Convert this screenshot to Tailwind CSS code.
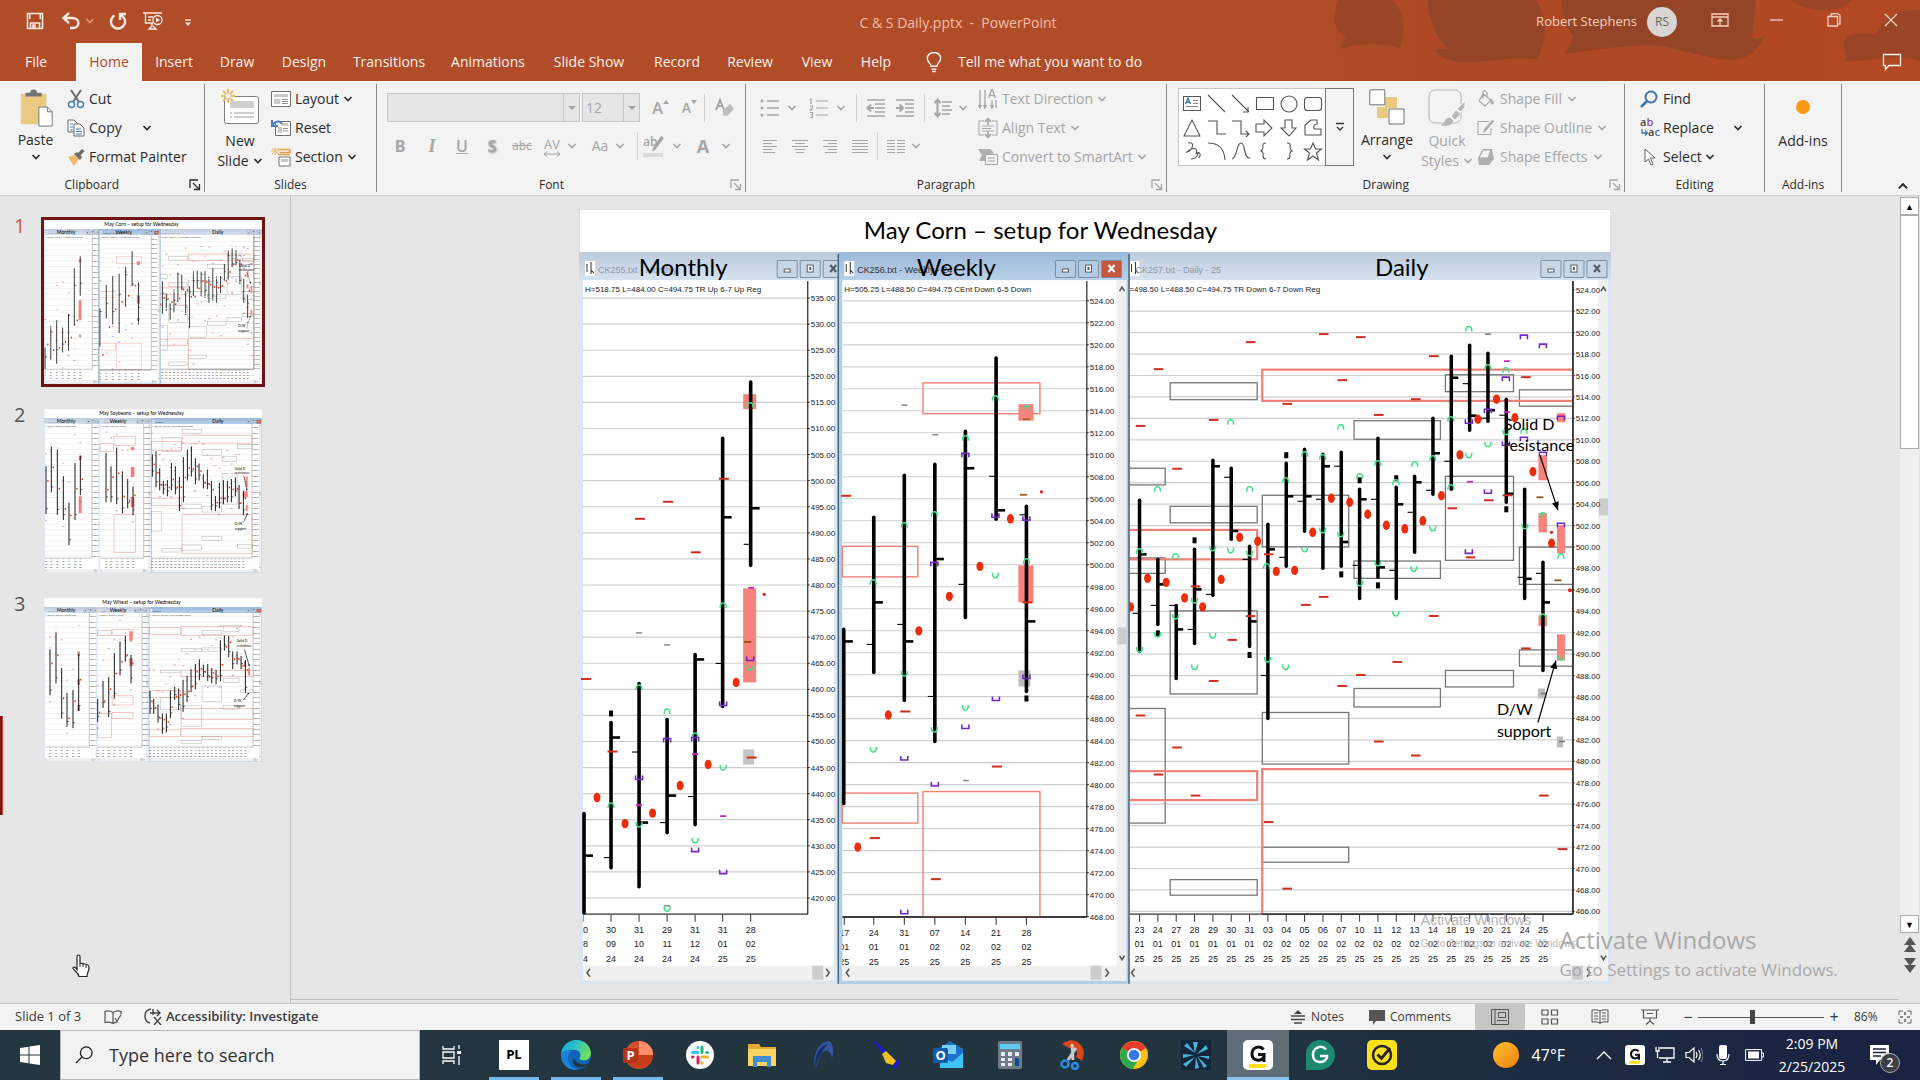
<!DOCTYPE html>
<html lang="en">
<head>
<meta charset="utf-8">
<meta name="viewport" content="width=device-width, initial-scale=1">
<title>C &amp; S Daily.pptx - PowerPoint</title>
<script src="https://cdn.jsdelivr.net/npm/@tailwindcss/browser@4"></script>
</head>
<body class="flex min-h-screen flex-col overflow-x-hidden bg-[#e6e6e6] font-['Open_Sans',sans-serif] text-sm text-[#262626]">

<!-- Icon sprite -->
<svg class="hidden" aria-hidden="true">
  <symbol id="chev" viewBox="0 0 10 10"><path d="M1.5 3l3.5 3.5L8.500 3" fill="none" stroke="currentColor" stroke-width="1.6"/></symbol>
  <symbol id="launch" viewBox="0 0 12 12"><path d="M1 9V1h8M4 4l6 6M10.500 5v5.500H5" fill="none" stroke="currentColor" stroke-width="1.300"/></symbol>
  <symbol id="save" viewBox="0 0 18 18"><path d="M1.500 1.500h15v15h-15zM4.500 16v-5h9v5M7 16v-3h2v3" fill="none" stroke="currentColor" stroke-width="1.600"/><path d="M3 2h1.500v5H3zm10.500 0H15v5h-1.500z" fill="currentColor"/></symbol>
  <symbol id="undo" viewBox="0 0 20 18"><path d="M8 1L2.500 6 8 11M3 6h8c9 0 8 10 1 10H9" fill="none" stroke="currentColor" stroke-width="2.400"/></symbol>
  <symbol id="redo" viewBox="0 0 18 18"><path d="M5.500 3.500a7 7 0 1 0 6-.5M11 8V2h6" fill="none" stroke="currentColor" stroke-width="2.400"/></symbol>
  <symbol id="present" viewBox="0 0 20 18"><path d="M0 1h19M2.500 1v10H10M5 5h5M5 8h3M9 11v3l-3 3h7l-3-3" fill="none" stroke="currentColor" stroke-width="1.400"/><circle cx="14.500" cy="8" r="4.500" fill="none" stroke="currentColor" stroke-width="1.300"/><path d="M13 5.500v5l4-2.500z" fill="currentColor"/></symbol>
  <symbol id="customize" viewBox="0 0 8 8"><path d="M1 1h6" stroke="currentColor" stroke-width="1.300"/><path d="M1 3.500h6L4 7z" fill="currentColor"/></symbol>
  <symbol id="bulb" viewBox="0 0 16 22"><path d="M5 15c0-3-4-4-4-8.500a7 6 0 0 1 14 0C15 11 11 12 11 15zM5.500 18h5M6 20.500h4" fill="none" stroke="currentColor" stroke-width="1.500"/></symbol>
  <symbol id="paste" viewBox="0 0 36 40"><path d="M2 5h27v32H2z" fill="#eaca80"/><path d="M7 8V4h5a3.500 3.500 0 0 1 7 0h5v4z" fill="#737373"/><path d="M21 19h9l5 5v15H21z" fill="#fff" stroke="#737373"/><path d="M30 19v5h5" fill="none" stroke="#737373"/></symbol>
  <symbol id="cut" viewBox="0 0 18 20"><path d="M4 1l8 12M14 1L6 13" stroke="#6b6b6b" stroke-width="2" fill="none"/><circle cx="4.500" cy="15.500" r="3" fill="none" stroke="#4a7fb5" stroke-width="1.500"/><circle cx="13.500" cy="15.500" r="3" fill="none" stroke="#4a7fb5" stroke-width="1.500"/></symbol>
  <symbol id="copy" viewBox="0 0 18 18"><path d="M1 1h6l3 3v9H1z" fill="#fff" stroke="#6b6b6b"/><path d="M7 5h6l4 4v8H7z" fill="#fff" stroke="#6b6b6b"/><path d="M3 5h3M3 8h3M3 11h3M9 10h5M9 12.500h6M9 15h6" stroke="#4a7fb5"/></symbol>
  <symbol id="painter" viewBox="0 0 18 18"><path d="M1 9l7-2 4 4-5 7z" fill="#eaba6a"/><path d="M7 6l6 6 2-3-5-5zM11 5l4-4 2.500 2-4 4.500z" fill="#6b6b6b"/></symbol>
  <symbol id="newslide" viewBox="0 0 40 38"><rect x="4.500" y="8.500" width="34" height="27" rx="2" fill="#fff" stroke="#808080"/><path d="M10 13h24v7H10z" fill="#d0d0d0"/><path d="M10 25h2M14 25h20M10 29h2M14 29h20" stroke="#a0a0a0"/><path d="M8 1v14M1 8h14M3 3l10 10M13 3L3 13" stroke="#eaba6a" stroke-width="2"/><circle cx="8" cy="8" r="2.500" fill="#f3f3f3"/></symbol>
  <symbol id="layout" viewBox="0 0 20 18"><path d="M.5 1.500h19v15H.5z" fill="#fff" stroke="#707070"/><path d="M3 4h14v3H3zM3 9h6v5H3z" fill="#c8c8c8"/><path d="M11 9.500h6M11 11.500h6M11 13.500h6" stroke="#909090"/></symbol>
  <symbol id="reset" viewBox="0 0 20 18"><path d="M4.500 2.500h15v14h-15z" fill="#fff" stroke="#707070"/><path d="M7 8h4v6H7zM11 4h6v3h-6z" fill="#c8c8c8"/><path d="M12 9.500h5M12 12h5" stroke="#909090"/><path d="M1 1v6h6M1 6.500C4 2 9 1 11 5" fill="none" stroke="#4a7fb5" stroke-width="2"/></symbol>
  <symbol id="section" viewBox="0 0 20 20"><path d="M7 2.500h12v3H9M7 7.500h12" fill="none" stroke="#e0a050" stroke-width="1.500"/><path d="M4 0v8M0 4h8M1 1l6 6M7 1L1 7" stroke="#eaba6a"/><path d="M8 10h11v9H8z" fill="#fff" stroke="#707070"/><path d="M10 12h7v3h-7z" fill="#c8c8c8"/></symbol>
  <symbol id="eraser" viewBox="0 0 20 20"><path d="M1 12L5 2l4 10M2.500 8h5" fill="none" stroke="#a6a6a6" stroke-width="2"/><path d="M8 12l7-6 4 5-7 7-4-1z" fill="#bdbdbd"/></symbol>
  <symbol id="bullets" viewBox="0 0 20 20"><circle cx="2" cy="3" r="1.500" fill="#a6a6a6"/><circle cx="2" cy="10" r="1.500" fill="#a6a6a6"/><circle cx="2" cy="17" r="1.500" fill="#a6a6a6"/><path d="M7 3h12M7 10h12M7 17h12" stroke="#a6a6a6" stroke-width="1.300"/></symbol>
  <symbol id="numbers" viewBox="0 0 20 20"><path d="M1 2l1-1v5M1 8h2.500v2L1 12h2.500M1 14.500h2.500v5H1M1.500 17h2M7 3h12M7 10h12M7 17h12" fill="none" stroke="#a6a6a6" stroke-width="1.200"/></symbol>
  <symbol id="outdent" viewBox="0 0 20 20"><path d="M1 2h18M9 6h10M9 10h10M9 14h10M1 18h18" stroke="#a6a6a6" stroke-width="1.400"/><path d="M8 10H2M5 6.500L1.500 10 5 13.500" fill="none" stroke="#a6a6a6" stroke-width="2"/></symbol>
  <symbol id="indent" viewBox="0 0 20 20"><path d="M1 2h18M10 6h9M10 10h9M10 14h9M1 18h18" stroke="#a6a6a6" stroke-width="1.400"/><path d="M1 10h6M4.500 6.500L8 10l-3.500 3.500" fill="none" stroke="#a6a6a6" stroke-width="2"/></symbol>
  <symbol id="spacing" viewBox="0 0 18 20"><path d="M8 4h10M8 8h8M8 12h10M8 16h8" stroke="#a6a6a6" stroke-width="1.400"/><path d="M3.500 2v16M.5 5l3-3.500 3 3.500M.5 15l3 3.500 3-3.500" fill="none" stroke="#a6a6a6" stroke-width="2"/></symbol>
  <symbol id="al" viewBox="0 0 16 14"><path d="M1 1.500h14M1 4.500h9M1 7.500h14M1 10.500h9M1 13.500h12" stroke="#a6a6a6"/></symbol>
  <symbol id="ac" viewBox="0 0 16 14"><path d="M0 1.500h16M3 4.500h10M0 7.500h16M3 10.500h10M4 13.500h8" stroke="#a6a6a6"/></symbol>
  <symbol id="ar" viewBox="0 0 16 14"><path d="M1 1.500h14M6 4.500h9M1 7.500h14M6 10.500h9M3 13.500h12" stroke="#a6a6a6"/></symbol>
  <symbol id="aj" viewBox="0 0 16 14"><path d="M0 1.500h16M0 4.500h16M0 7.500h16M0 10.500h16M0 13.500h16" stroke="#a6a6a6"/></symbol>
  <symbol id="cols" viewBox="0 0 18 14"><path d="M0 1.500h8M10 1.500h8M0 4.500h8M10 4.500h8M0 7.500h8M10 7.500h8M0 10.500h8M10 10.500h8M0 13.500h8M10 13.500h8" stroke="#a6a6a6"/></symbol>
  <symbol id="textdir" viewBox="0 0 20 20"><path d="M2 1v18M7 1v18M14 11v8M18 11v8M.5 16L2 19l1.500-3M5.500 16L7 19l1.500-3M12.500 16l1.500 3 1.500-3M10.500 9l3.500-9 3.500 9M12 6.500h4" fill="none" stroke="#a6a6a6" stroke-width="1.300"/></symbol>
  <symbol id="aligntext" viewBox="0 0 20 20"><path d="M6 3H1v14h5M14 3h5v14h-5M4 8h12M4 10.500h9M4 13h12" fill="none" stroke="#a6a6a6"/><path d="M10 1v6M10 13v6M7 4l3-3.500L13 4M7 16l3 3.500 3-3.500" fill="none" stroke="#a6a6a6" stroke-width="1.700"/></symbol>
  <symbol id="smartart" viewBox="0 0 20 16"><path d="M0 0h12l4 4-4 1H7v7H1l3-6z" fill="#b0b0b0"/><path d="M7.500 5.500h12v10h-12z" fill="#f3f3f3" stroke="#a6a6a6"/><path d="M10 9h7M10 12h7" stroke="#a6a6a6"/></symbol>
  <symbol id="arrange" viewBox="0 0 36 36"><path d="M16 8h12v11H16zM8 18h11v11H8z" fill="#eaca80"/><path d="M.8.8h15v15h-15zM20 20h15v15H20z" fill="#fff" stroke="#737373"/></symbol>
  <symbol id="quick" viewBox="0 0 38 38"><rect x="1" y="1" width="32" height="33" rx="6" fill="#f5f5f5" stroke="#b4b4b4"/><path d="M37 12l-8 8 4 3 4-5zM28 21l-5 6 4 4 6-6zM22 28c-6 0-5 7-11 8 7 3 14 1 15-4z" fill="#b8b8b8" stroke="#f3f3f3"/></symbol>
  <symbol id="fill" viewBox="0 0 18 18"><path d="M6 4l8 6-6 6-6-5zM6 9V2q2-3 4 1v4" fill="none" stroke="#a6a6a6" stroke-width="1.200"/><path d="M14 9q3 3 2 5-2 1-2-5z" fill="#a6a6a6" stroke="#a6a6a6"/></symbol>
  <symbol id="outline" viewBox="0 0 18 16"><path d="M12 1.500H1v13h13V8" fill="none" stroke="#a6a6a6"/><path d="M17.500 1L9 11l-3 2 1-4 8-9z" fill="#b0b0b0"/></symbol>
  <symbol id="effects" viewBox="0 0 18 18"><path d="M6 1h9l2 10-5 6H2L1 10z" fill="#b0b0b0"/><path d="M6 2h8l-3 8H2z" fill="#f3f3f3" stroke="#a6a6a6"/></symbol>
  <symbol id="find" viewBox="0 0 18 18"><circle cx="11" cy="7" r="5.500" fill="none" stroke="#3f74b0" stroke-width="2"/><path d="M7 11l-6 6" stroke="#3f74b0" stroke-width="2.500"/></symbol>
  <symbol id="select" viewBox="0 0 12 18"><path d="M1 1v13l3.500-3 2.500 6 2-1-2.500-6H11z" fill="#fff" stroke="#606060"/></symbol>
  <symbol id="comment" viewBox="0 0 20 18"><path d="M1.500 1.500h17v11H7l-3.500 4v-4h-2z" fill="none" stroke="currentColor" stroke-width="1.300"/></symbol>
  <symbol id="gram" viewBox="0 0 30 30"><rect width="30" height="30" rx="5" fill="#fff"/><path d="M6 24h18l-2 4H6z" fill="#ffe11a"/><path d="M20.500 9.500C17 5 9 7 9 14s9 8 12 3v-2.500h-6M21 14v8" fill="none" stroke="#111" stroke-width="3"/></symbol>
</svg>

<header class="relative h-[81px] shrink-0 bg-[#b14c29] text-[#fbe9e2]">
  <svg class="absolute top-0 right-0 h-full w-[620px]" viewBox="0 0 620 81" aria-hidden="true">
    <defs><linearGradient id="hg"><stop offset="0" stop-color="#b14c29"/><stop offset=".25" stop-color="#ad4925"/><stop offset="1" stop-color="#b34824"/></linearGradient></defs>
    <path d="M0 0h620v81H0z" fill="url(#hg)"/>
    <g fill="#944527"><path d="M22 0h70c12 10 14 30 8 48-20-6-42-5-59 1 0-8 4-7 4-12-14-10-12-26-6-37z" opacity=".8"/><path d="M128 0h108c12 18 11 40 1 60-22-6-60 6-84 1-10-2-15-6-17-12h12c-14-14-20-32-20-49z"/><path d="M263 0h193l-4 38c6 2 8 0 12-2-6 14-14 24-36 24-30-2-60-18-94-14-24 1-40 4-69 8 2-6 6-10 8-18-8-10-14-26-10-38z"/><path d="M490 0h62c-14 16-44 12-62 0zM620 10c-20-2-36 8-44 24-14 0-32-4-32 10 0 10 4 12 0 17 24 2 50-8 76 0z" opacity=".8"/></g>
  </svg>
  <div class="relative flex h-[43px] items-center">
    <div class="flex w-[240px] items-center pt-px pb-[3px] pl-[26px]">
      <button aria-label="Save"><svg class="h-[18px] w-[18px]"><use href="#save"/></svg></button>
      <button class="ml-[17px]" aria-label="Undo"><svg class="h-[18px] w-5"><use href="#undo"/></svg></button>
      <button class="ml-1 text-[#dd9b80]" aria-label="Undo options"><svg class="h-2.5 w-2.5"><use href="#chev"/></svg></button>
      <button class="ml-3.5" aria-label="Repeat"><svg class="h-[18px] w-[18px]"><use href="#redo"/></svg></button>
      <button class="ml-4" aria-label="Start from beginning"><svg class="h-[18px] w-5"><use href="#present"/></svg></button>
      <button class="ml-[21px] pt-1" aria-label="Customize toolbar"><svg class="h-2 w-2"><use href="#customize"/></svg></button>
    </div>
    <p class="flex-1 pt-[3px] pl-[140px] text-center text-sm whitespace-pre text-[#f3bda6]">C &amp; S Daily.pptx  -  PowerPoint</p>
    <div class="flex items-center text-[#f8cfbe]">
      <span class="text-[13px]">Robert Stephens</span>
      <span class="ml-2.5 flex h-[30px] w-[30px] items-center justify-center rounded-full bg-[#d9d5d3] text-xs text-[#666]">RS</span>
      <button class="ml-[33px] flex w-[20px] justify-center pb-1" aria-label="Ribbon display options"><svg class="h-3.5 w-[18px]" viewBox="0 0 18 14"><path d="M1 1h16v12H1zM1 4h16M9 12V6M6.500 8.500L9 6l2.500 2.500" fill="none" stroke="currentColor" stroke-width="1.300"/></svg></button>
      <button class="ml-[37px] flex w-[20px] justify-center pb-1" aria-label="Minimize"><svg class="h-3.5 w-3.5" viewBox="0 0 14 14"><path d="M0 7h13" stroke="currentColor" stroke-width="1.300"/></svg></button>
      <button class="ml-9 flex w-[22px] justify-center pb-1" aria-label="Restore"><svg class="h-3.5 w-3.5" viewBox="0 0 14 14"><path d="M1 3.500h9.500V13H1zM4 3V1q6-1 9 1v9h-2" fill="none" stroke="currentColor" stroke-width="1.300"/></svg></button>
      <button class="mr-[22px] ml-[39px] flex w-[14px] justify-center pb-1" aria-label="Close"><svg class="h-3.5 w-3.5" viewBox="0 0 14 14"><path d="M1 1l12 12M13 1L1 13" stroke="currentColor" stroke-width="1.400"/></svg></button>
    </div>
  </div>
  <nav class="relative flex h-[38px] items-center text-sm text-[#fdf1ec]">
    <a href="#" class="flex w-[76px] justify-center pr-1">File</a>
    <a href="#" class="flex h-full w-[66px] items-center justify-center bg-[#f3f3f3] text-[#b14c29]">Home</a>
    <a href="#" class="w-[64px] text-center">Insert</a>
    <a href="#" class="w-[62px] text-center">Draw</a>
    <a href="#" class="w-[72px] text-center">Design</a>
    <a href="#" class="w-[98px] text-center">Transitions</a>
    <a href="#" class="w-[100px] text-center">Animations</a>
    <a href="#" class="w-[102px] text-center">Slide Show</a>
    <a href="#" class="w-[74px] text-center">Record</a>
    <a href="#" class="w-[72px] text-center">Review</a>
    <a href="#" class="w-[62px] text-center">View</a>
    <a href="#" class="w-[56px] text-center">Help</a>
    <button class="ml-[22px] flex items-center gap-4"><svg class="h-[21px] w-4"><use href="#bulb"/></svg><span>Tell me what you want to do</span></button>
    <button class="mr-[18px] ml-auto" aria-label="Comments"><svg class="h-[18px] w-5"><use href="#comment"/></svg></button>
  </nav>
</header>

<!-- Ribbon -->
<section class="flex h-[115px] shrink-0 border-b border-[#cfcfcf] bg-[#f3f3f3] py-[3px] text-sm text-[#2b2b2b]" aria-label="Home ribbon">
  <div class="flex w-[205px] shrink-0 flex-col border-r border-[#8a8a8a]">
    <div class="flex h-[87px]">
      <button class="flex w-[67px] flex-col items-center pt-[5px] pl-1"><svg class="h-[38px] w-9"><use href="#paste"/></svg><span class="mt-[3px]">Paste</span><svg class="mt-0.5 h-2.5 w-2.5"><use href="#chev"/></svg></button>
      <div class="grid grid-rows-3">
        <button class="flex items-center gap-1"><svg class="h-5 w-[18px]"><use href="#cut"/></svg>Cut</button>
        <button class="flex items-center gap-1"><svg class="h-[18px] w-[18px]"><use href="#copy"/></svg>Copy<svg class="ml-4 h-2.5 w-2.5"><use href="#chev"/></svg></button>
        <button class="flex items-center gap-1"><svg class="h-[18px] w-[18px]"><use href="#painter"/></svg>Format Painter</button>
      </div>
    </div>
    <div class="flex h-[21px] items-center justify-end pt-[7px] pr-[3px] text-xs"><span class="mr-[70px]">Clipboard</span><button aria-label="Clipboard options"><svg class="h-3 w-3"><use href="#launch"/></svg></button></div>
  </div>
  <div class="flex w-[172px] shrink-0 flex-col border-r border-[#8a8a8a]">
    <div class="flex h-[87px]">
      <button class="flex w-[66px] flex-col items-center pt-1 pl-1 leading-5"><svg class="h-[38px] w-10"><use href="#newslide"/></svg><span class="mt-[5px]">New</span><span class="flex items-center gap-1">Slide<svg class="h-2.5 w-2.5"><use href="#chev"/></svg></span></button>
      <div class="grid grid-rows-3">
        <button class="flex items-center gap-1"><svg class="h-[18px] w-5"><use href="#layout"/></svg>Layout<svg class="h-2.5 w-2.5"><use href="#chev"/></svg></button>
        <button class="flex items-center gap-1"><svg class="h-[18px] w-5"><use href="#reset"/></svg>Reset</button>
        <button class="flex items-center gap-1"><svg class="h-5 w-5"><use href="#section"/></svg>Section<svg class="h-2.5 w-2.5"><use href="#chev"/></svg></button>
      </div>
    </div>
    <div class="flex h-[21px] items-center justify-center pt-[7px] text-xs">Slides</div>
  </div>
  <div class="flex w-[369px] shrink-0 flex-col border-r border-[#8a8a8a] text-[#a6a6a6]">
    <div class="h-[87px] pt-[9px] pl-[10px]">
      <div class="flex h-[29px] items-center">
        <label class="flex h-[29px] w-[193px] border border-[#c6c6c6] bg-[#e6e6e6]"><span class="sr-only">Font</span><select disabled class="h-full flex-1 appearance-none opacity-100"><option></option></select><span class="flex w-4 items-center justify-center border-l border-[#c6c6c6]"><svg class="h-1 w-2" viewBox="0 0 8 4"><path d="M0 0h8L4 4z" fill="#a6a6a6"/></svg></span></label>
        <label class="ml-0.5 flex h-[29px] w-[58px] border border-[#c6c6c6] bg-[#e6e6e6]"><span class="sr-only">Font size</span><select disabled class="h-full flex-1 appearance-none pl-[3px] opacity-100"><option>12</option></select><span class="flex w-4 items-center justify-center border-l border-[#c6c6c6]"><svg class="h-1 w-2" viewBox="0 0 8 4"><path d="M0 0h8L4 4z" fill="#a6a6a6"/></svg></span></label>
        <button class="ml-1.5 flex w-[29px] justify-center text-base font-semibold" aria-label="Increase font size">A<svg class="mt-1 h-1 w-1.5" viewBox="0 0 6 4"><path d="M0 4h6L3 0z" fill="#a6a6a6"/></svg></button>
        <button class="flex w-[29px] justify-center text-sm font-semibold" aria-label="Decrease font size">A<svg class="mt-0.5 h-1 w-1.5" viewBox="0 0 6 4"><path d="M0 0h6L3 4z" fill="#a6a6a6"/></svg></button>
        <span class="h-7 w-px bg-[#cfcfcf]"></span>
        <button class="ml-[10px]" aria-label="Clear formatting"><svg class="h-5 w-5"><use href="#eraser"/></svg></button>
      </div>
      <div class="mt-2 flex h-[32px] items-center text-base">
        <button class="w-[30px] pr-1 font-bold">B</button>
        <button class="w-[30px] font-['Liberation_Serif',serif] text-lg font-bold italic">I</button>
        <button class="w-[30px] font-semibold underline">U</button>
        <button class="w-[30px] font-bold [text-shadow:1px_1px_2px_#999]">S</button>
        <button class="w-[30px] text-xs line-through">abc</button>
        <button class="flex w-[30px] flex-col items-center text-[13px] leading-4">AV<svg class="-mt-px h-1.5 w-[18px]" viewBox="0 0 18 6"><path d="M1 3h16M4 .5L1 3l3 2.500M14 .5L17 3l-3 2.500" fill="none" stroke="currentColor"/></svg></button>
        <svg class="h-2.5 w-2.5"><use href="#chev"/></svg>
        <button class="ml-2 w-[30px] text-sm">Aa</button>
        <svg class="h-2.5 w-2.5"><use href="#chev"/></svg>
        <span class="ml-3 h-7 w-px bg-[#cfcfcf]"></span>
        <button class="ml-1 flex w-6 flex-col items-center" aria-label="Highlight"><svg class="h-[22px] w-[22px]" viewBox="0 0 22 22"><text x="0" y="11" font-size="12" font-weight="600" fill="#a6a6a6">ab</text><path d="M21 3l-9 12-3 1 1-3 8-12z" fill="#a6a6a6"/><path d="M0 18h20v4H0z" fill="#dcdcdc"/></svg></button>
        <svg class="ml-[6px] h-2.5 w-2.5"><use href="#chev"/></svg>
        <button class="ml-[9px] w-6 text-lg font-bold">A</button>
        <svg class="ml-[6px] h-2.5 w-2.5"><use href="#chev"/></svg>
      </div>
    </div>
    <div class="flex h-[21px] items-center justify-end pt-[7px] pr-[3px] text-xs"><span class="mr-[166px] text-[#2b2b2b]">Font</span><button aria-label="Font options"><svg class="h-3 w-3"><use href="#launch"/></svg></button></div>
  </div>
  <div class="flex w-[421px] shrink-0 flex-col border-r border-[#8a8a8a] text-[#a6a6a6]">
    <div class="flex h-[87px]">
      <div class="w-[232px] pt-[9px] pl-[14px]">
        <div class="flex h-[29px] items-center">
          <button aria-label="Bullets"><svg class="h-5 w-5"><use href="#bullets"/></svg></button><svg class="ml-[7px] h-2.5 w-2.5"><use href="#chev"/></svg>
          <button class="ml-3" aria-label="Numbering"><svg class="h-5 w-5"><use href="#numbers"/></svg></button><svg class="ml-[7px] h-2.5 w-2.5"><use href="#chev"/></svg>
          <span class="ml-[10px] h-7 w-px bg-[#cfcfcf]"></span>
          <button class="ml-[9px]" aria-label="Decrease indent"><svg class="h-5 w-5"><use href="#outdent"/></svg></button>
          <button class="ml-[9px]" aria-label="Increase indent"><svg class="h-5 w-5"><use href="#indent"/></svg></button>
          <span class="ml-[9px] h-7 w-px bg-[#cfcfcf]"></span>
          <button class="ml-[9px]" aria-label="Line spacing"><svg class="h-5 w-[18px]"><use href="#spacing"/></svg></button><svg class="ml-[6px] h-2.5 w-2.5"><use href="#chev"/></svg>
        </div>
        <div class="mt-2 flex h-[32px] items-center gap-3.5 pl-[2px]">
          <button aria-label="Align left"><svg class="h-3.5 w-4"><use href="#al"/></svg></button>
          <button aria-label="Center"><svg class="h-3.5 w-4"><use href="#ac"/></svg></button>
          <button aria-label="Align right"><svg class="h-3.5 w-4"><use href="#ar"/></svg></button>
          <button aria-label="Justify"><svg class="h-3.5 w-4"><use href="#aj"/></svg></button>
          <span class="-mx-[5px] h-7 w-px bg-[#cfcfcf]"></span>
          <button class="flex items-center gap-1.5" aria-label="Columns"><svg class="h-3.5 w-[18px]"><use href="#cols"/></svg><svg class="h-2.5 w-2.5"><use href="#chev"/></svg></button>
        </div>
      </div>
      <div class="grid grid-rows-3">
        <button class="flex items-center gap-1"><svg class="h-5 w-5"><use href="#textdir"/></svg>Text Direction<svg class="h-2.5 w-2.5"><use href="#chev"/></svg></button>
        <button class="flex items-center gap-1"><svg class="h-5 w-5"><use href="#aligntext"/></svg>Align Text<svg class="h-2.5 w-2.5"><use href="#chev"/></svg></button>
        <button class="flex items-center gap-1"><svg class="h-4 w-5"><use href="#smartart"/></svg>Convert to SmartArt<svg class="h-2.5 w-2.5"><use href="#chev"/></svg></button>
      </div>
    </div>
    <div class="flex h-[21px] items-center justify-end pt-[7px] pr-[3px] text-xs"><span class="mr-[176px] text-[#2b2b2b]">Paragraph</span><button aria-label="Paragraph options"><svg class="h-3 w-3"><use href="#launch"/></svg></button></div>
  </div>
  <div class="flex w-[458px] shrink-0 flex-col border-r border-[#8a8a8a]">
    <div class="flex h-[87px]">
      <div class="mt-1 ml-[11px] flex h-[78px] border border-[#c6c6c6] bg-white">
        <svg class="h-[76px] w-[146px]" viewBox="0 0 146 76" fill="none" stroke="#555" stroke-width="1.100" role="img" aria-label="Shapes">
          <path d="M4.500 7.500h17v14h-17z"/><path d="M14 11.500h5M14 14.500h5M7 17.500h12" stroke="#888"/><path d="M6.500 15l2.500-6 2.500 6M7.500 13h3" stroke="#3f74b0" stroke-width="1.400"/>
          <path d="M29 6l17 17M53 6l17 17m-1-5v5h-5M77.500 8.500h17v12h-17z"/><circle cx="110" cy="15" r="8"/><rect x="125.500" y="8.500" width="17" height="13" rx="3"/>
          <path d="M13 31l8 16H5zM29 32h9v13h9M53 32h9v13h8m-3-3l3 3-3 3M77 35h8v-4l8 8-8 8v-4h-8zM106 31h7v8h4l-7 8-8-8h4zM126 46V36l6-5h6v4q-4 0-3 5h7v6z"/>
          <path d="M9 54c8-2 4 8-1 9 4-4 12-6 9 2 2-3 6-1 3 4M12 70q6 0 7-6M29 54q16 0 17 17M53 70c6-2 4-16 9-16s2 16 9 15M87 54q-4 0-3 4 0 3-2 4 3 1 2 5 0 3 3 3M108 54q4 0 3 4 0 3 2 4-3 1-2 5 0 3-3 3M134 54l2.500 6h6l-5 4 2 7-5.500-4-5.500 4 2-7-5-4h6z"/>
        </svg>
        <button class="-my-px -mr-px flex w-[29px] items-center justify-center border border-[#777] bg-[#f3f3f3]" aria-label="More shapes"><svg class="h-2.5 w-2.5" viewBox="0 0 10 10"><path d="M1 1.500h8M2 5l3 3 3-3" fill="none" stroke="#333" stroke-width="1.300"/></svg></button>
      </div>
      <button class="ml-[5px] flex w-[56px] flex-col items-center pt-[5px]"><svg class="h-9 w-9"><use href="#arrange"/></svg><span class="mt-[5px]">Arrange</span><svg class="mt-0.5 h-2.5 w-2.5"><use href="#chev"/></svg></button>
      <button class="flex w-[62px] flex-col items-center pt-[5px] pl-0.5 leading-5 text-[#a6a6a6]"><svg class="h-[38px] w-[38px]"><use href="#quick"/></svg><span class="mt-1">Quick</span><span class="flex items-center gap-1">Styles<svg class="h-2.5 w-2.5"><use href="#chev"/></svg></span></button>
      <div class="grid grid-rows-3 text-[#a6a6a6]">
        <button class="flex items-center gap-[5px]"><svg class="h-[18px] w-[18px]"><use href="#fill"/></svg>Shape Fill<svg class="h-2.5 w-2.5"><use href="#chev"/></svg></button>
        <button class="flex items-center gap-[5px]"><svg class="h-4 w-[18px]"><use href="#outline"/></svg>Shape Outline<svg class="h-2.5 w-2.5"><use href="#chev"/></svg></button>
        <button class="flex items-center gap-[5px]"><svg class="h-[18px] w-[18px]"><use href="#effects"/></svg>Shape Effects<svg class="h-2.5 w-2.5"><use href="#chev"/></svg></button>
      </div>
    </div>
    <div class="flex h-[21px] items-center justify-end pt-[7px] pr-[3px] text-xs"><span class="mr-[200px]">Drawing</span><button class="text-[#a6a6a6]" aria-label="Drawing options"><svg class="h-3 w-3"><use href="#launch"/></svg></button></div>
  </div>
  <div class="flex w-[140px] shrink-0 flex-col border-r border-[#8a8a8a]">
    <div class="grid h-[87px] grid-rows-3 pl-[15px]">
      <button class="flex items-center gap-[5px]"><svg class="h-[18px] w-[18px]"><use href="#find"/></svg>Find</button>
      <button class="flex items-center gap-[3px]"><svg class="h-5 w-5" viewBox="0 0 20 20" font-size="11" font-weight="600"><text x="0" y="8" fill="#444">a<tspan fill="#8a4fb5">b</tspan></text><text x="8" y="18" fill="#444">a<tspan fill="#3f74b0">c</tspan></text><path d="M2 11v4h5M5 12.500L7.500 15 5 17.500" fill="none" stroke="#3f74b0" stroke-width="1.300"/></svg>Replace<svg class="ml-4 h-2.5 w-2.5"><use href="#chev"/></svg></button>
      <button class="flex items-center gap-[7px]"><svg class="ml-1 h-[18px] w-3"><use href="#select"/></svg>Select<svg class="-ml-1 h-2.5 w-2.5"><use href="#chev"/></svg></button>
    </div>
    <div class="flex h-[21px] items-center justify-center pt-[7px] text-xs">Editing</div>
  </div>
  <div class="flex w-[77px] shrink-0 flex-col border-r border-[#8a8a8a]">
    <button class="flex h-[87px] flex-col items-center pt-4"><span class="h-3.5 w-3.5 rounded-full bg-[#fa9a14]"></span><span class="mt-[17px]">Add-ins</span></button>
    <div class="flex h-[21px] items-center justify-center pt-[7px] text-xs">Add-ins</div>
  </div>
  <div class="flex flex-1 items-end justify-end pr-[11px]"><button aria-label="Collapse the ribbon"><svg class="h-3 w-3 rotate-180"><use href="#chev"/></svg></button></div>
</section>

<main class="flex flex-1">
  <!-- Slide thumbnails -->
  <aside class="relative w-[291px] shrink-0 border-r border-[#bdbdbd] pt-[21px]" aria-label="Slides">
    <ol class="flex flex-col gap-[19px] text-xl leading-[18px]">
      <li class="flex"><span class="w-[41px] pl-[14px] text-[#c8593a]">1</span><a href="#" class="border-[3px] border-[#6e1414]"><svg id="t1" class="block h-[164px] w-[218px]" viewBox="580 209 1031 774" preserveAspectRatio="none" role="img" aria-label="May Corn"></svg></a></li>
      <li class="flex"><span class="w-[41px] pl-[14px] text-[#555]">2</span><a href="#" class="border-[3px] border-transparent"><svg id="t2" class="block h-[164px] w-[218px]" viewBox="580 209 1031 774" preserveAspectRatio="none" role="img" aria-label="May Soybeans"></svg></a></li>
      <li class="flex"><span class="w-[41px] pl-[14px] text-[#555]">3</span><a href="#" class="border-[3px] border-transparent"><svg id="t3" class="block h-[164px] w-[218px]" viewBox="580 209 1031 774" preserveAspectRatio="none" role="img" aria-label="May Wheat"></svg></a></li>
    </ol>
    <span class="absolute top-[520px] left-0 h-[99px] w-[3px] border-r border-[#d0453a] bg-[#7c130d]"></span>
    <svg class="absolute top-[758px] left-[72px] h-6 w-[18px]" viewBox="0 0 18 24" aria-hidden="true"><path d="M5 14V2.500a1.500 1.500 0 0 1 3 0V9l7 1.500q2 .5 2 3c0 4-2 5-2 9H7c-1-4-4-5-6-8 0-2 2-2 4 1z" fill="#fff" stroke="#222" stroke-width="1.200"/><path d="M8 9v4M11 10v3M14 11v3" stroke="#222"/></svg>
  </aside>
  <section class="relative mb-[3px] flex flex-1 flex-col border-b border-[#bdbdbd] px-8 pt-[13px]" aria-label="Slide">
    <svg id="slide" class="mx-auto block w-full max-w-[1032px]" viewBox="580 209 1031 774" role="img" aria-label="May Corn – setup for Wednesday"></svg>
    <div class="pointer-events-none absolute right-[61px] bottom-[15px] text-[#a9a9a9]"><p class="text-2xl leading-8">Activate Windows</p><p class="text-[17px] leading-7">Go to Settings to activate Windows.</p></div>
  </section>
  <div class="flex w-[21px] shrink-0 flex-col items-center pt-px pb-[30px]" aria-label="Vertical scroll">
    <button class="h-[18px] w-[19px] border border-[#ababab] bg-white text-[9px] leading-none text-black" aria-label="Scroll up">▲</button>
    <div class="h-[234px] w-[19px] border border-[#ababab] bg-white"></div>
    <div class="w-[19px] flex-1 bg-[#efefef]"></div>
    <button class="h-[18px] w-[19px] border border-[#ababab] bg-white text-[9px] leading-none text-black" aria-label="Scroll down">▼</button>
    <button class="mt-1 text-[#555]" aria-label="Previous slide"><svg class="h-4 w-3" viewBox="0 0 12 16"><path d="M6 0l6 8H0zM6 7l6 8H0z" fill="currentColor"/></svg></button>
    <button class="mt-1 text-[#555]" aria-label="Next slide"><svg class="h-4 w-3 rotate-180" viewBox="0 0 12 16"><path d="M6 0l6 8H0zM6 7l6 8H0z" fill="currentColor"/></svg></button>
  </div>
</main>

<footer class="shrink-0">
  <div class="flex h-[27px] items-center border-t border-[#c6c6c6] bg-[#f3f3f3] text-xs text-[#3a3a3a]">
    <span class="w-[104px] pl-[15px] text-[13px]">Slide 1 of 3</span>
    <button aria-label="Spelling"><svg class="h-[15px] w-[18px]" viewBox="0 0 18 15"><path d="M9 2.500Q5 0 1 1.500v11q4-1 8 1 3-2 5-1.500M9 2.500v11M9 2.500Q13 0 17 1.500v3M11 8l2 3 4-6" fill="none" stroke="#555" stroke-width="1.200"/></svg></button>
    <button class="ml-[22px] flex items-center gap-1 text-[13px] font-semibold"><svg class="h-[17px] w-[18px]" viewBox="0 0 18 17"><path d="M7 1Q1 2 1 8t5 7M9 1v6M6 5h10M13 2l3 3-3 3M10 9l7 8M17 9l-7 8" fill="none" stroke="#444" stroke-width="1.400"/></svg>Accessibility: Investigate</button>
    <div class="ml-auto flex h-full items-center">
      <button class="flex items-center gap-1.5"><svg class="h-4 w-3.5" viewBox="0 0 14 16"><path d="M0 7h14M0 10.500h14M3 14h8" stroke="#444" stroke-width="1.300"/><path d="M3 5l4-4 4 4z" fill="#444"/></svg>Notes</button>
      <button class="ml-6 flex items-center gap-1"><svg class="h-4 w-[18px]" viewBox="0 0 18 16"><path d="M1 1h16v11H8l-3 4v-4H1z" fill="#555"/></svg>Comments</button>
      <button class="ml-6 flex h-full w-[50px] items-center justify-center bg-[#c6c6c6]" aria-label="Normal view"><svg class="h-4 w-[18px]" viewBox="0 0 18 16"><path d="M.5.5h17v15H.5zM4 0v16M7.500 3.500h7v5h-7zM6 11.500h10" fill="none" stroke="#555"/></svg></button>
      <button class="flex w-[50px] justify-center" aria-label="Slide sorter"><svg class="h-4 w-[18px]" viewBox="0 0 18 16"><path d="M1 1h6v5H1zM10.500 1h6v5h-6zM1 10h6v5H1zM10.500 10h6v5h-6z" fill="none" stroke="#555" stroke-width="1.200"/></svg></button>
      <button class="flex w-[50px] justify-center" aria-label="Reading view"><svg class="h-4 w-[18px]" viewBox="0 0 18 16"><path d="M9 2Q5 0 1 1v12q4-1 8 1 4-2 8-1V1q-4-1-8 1v13M3 4h4M3 7h4M3 10h4M11 4h4M11 7h4M11 10h4" fill="none" stroke="#555"/></svg></button>
      <button class="flex w-[50px] justify-center" aria-label="Slide show"><svg class="h-4 w-[18px]" viewBox="0 0 18 16"><path d="M0 1h18M2.500 1v8h13V1M6 4.500h6M9 9v3M5 15.500l4-3.500 4 3.500" fill="none" stroke="#555" stroke-width="1.200"/></svg></button>
      <button class="ml-[3px] w-5 text-base" aria-label="Zoom out">−</button>
      <input type="range" min="10" max="400" value="178" aria-label="Zoom" class="h-4 w-[126px] appearance-none bg-[linear-gradient(#555,#555)] bg-[length:100%_1px] bg-center bg-no-repeat [&::-webkit-slider-thumb]:h-3.5 [&::-webkit-slider-thumb]:w-[5px] [&::-webkit-slider-thumb]:appearance-none [&::-webkit-slider-thumb]:bg-[#444]">
      <button class="w-5 text-base" aria-label="Zoom in">+</button>
      <span class="ml-2.5 w-[43px]">86%</span>
      <button class="mr-2 ml-px" aria-label="Fit slide"><svg class="h-3.5 w-3.5" viewBox="0 0 14 14"><path d="M1 1h12v12H1z" fill="none" stroke="#666" stroke-dasharray="8 4" stroke-dashoffset="4"/><path d="M7 2v3M7 9v3M2 7h3M9 7h3" stroke="#666" stroke-width="1.600"/></svg></button>
    </div>
  </div>

  <div class="flex h-[50px] bg-linear-to-r from-[#23373f] via-[#22353f] via-60% to-[#1a2442] to-95% text-white">
    <button class="flex w-[60px] items-center justify-center" aria-label="Start"><svg class="h-5 w-5" viewBox="0 0 20 20"><path d="M0 3l8.500-1.200v7.700H0zM9.500 1.600L20 0v9.500H9.500zM0 10.500h8.500v7.700L0 17zM9.500 10.500H20V20L9.500 18.400z" fill="#fff"/></svg></button>
    <label class="flex w-[360px] items-center border border-[#b8b8b8] bg-[#f2f2f2] pl-[14px] text-[#222]"><svg class="h-5 w-5" viewBox="0 0 20 20"><circle cx="12.500" cy="7.500" r="6.500" fill="none" stroke="#222" stroke-width="1.500"/><path d="M8 12l-7 7" stroke="#222" stroke-width="1.500"/></svg><span class="sr-only">Search</span><input type="text" class="ml-4 w-full bg-transparent text-lg outline-none placeholder:text-[#333]" placeholder="Type here to search"></label>
    <div class="flex pl-px">
      <button class="flex w-[62px] items-center justify-center" aria-label="Task view"><svg class="h-5 w-5" viewBox="0 0 20 20"><path d="M1 1v3h11V1M1 7h11v6H1zM1 19v-3h11v3M17 0v4M17 11v9" fill="none" stroke="#fff" stroke-width="1.300"/><path d="M15 6h4v3h-4z" fill="#fff"/></svg></button>
      <button class="relative flex w-[62px] items-center justify-center" aria-label="PL"><span class="flex h-[30px] w-[30px] items-center justify-center bg-white font-['Roboto',sans-serif] text-xs font-black text-black">PL</span><span class="absolute bottom-0 h-[3px] w-[50px] bg-[#76b9ed]"></span></button>
      <button class="relative flex w-[62px] items-center justify-center" aria-label="Edge"><svg class="h-[30px] w-[30px]" viewBox="0 0 30 30"><defs><linearGradient id="eg" x2="1" y2=".4"><stop stop-color="#1aa0e0"/><stop offset=".5" stop-color="#2cc0c8"/><stop offset="1" stop-color="#6fe060"/></linearGradient></defs><circle cx="15" cy="15" r="15" fill="#1263b5"/><path d="M0 14C2-4 28-5 30 13c0 7-7 9-12 6 3-4 1-9-4-9C7 9 1 12 0 14z" fill="url(#eg)"/><path d="M11 11C3 15 7 28 17 30 8 31-1 24 0 14q5-6 11-3z" fill="#1c83d8"/><path d="M13 18c2 6 9 8 15 5q-6 6-12 4c-4-2-5-6-3-9z" fill="#23373f"/></svg><span class="absolute bottom-0 h-[3px] w-[50px] bg-[#76b9ed]"></span></button>
      <button class="relative flex w-[62px] items-center justify-center" aria-label="PowerPoint"><svg class="h-[28px] w-[30px]" viewBox="0 0 30 28"><circle cx="16" cy="14" r="14" fill="#d35230"/><path d="M16 0a14 14 0 0 1 14 14H16z" fill="#ff8f6b"/><path d="M16 14h14a14 14 0 0 1-25 8z" fill="#c43e1c"/><rect y="7" width="15" height="15" rx="1.500" fill="#b7341a"/><text x="3.500" y="19" font-size="13" font-weight="700" fill="#fff">P</text></svg><span class="absolute bottom-0 h-[3px] w-[50px] bg-[#76b9ed]"></span></button>
      <button class="flex w-[62px] items-center justify-center" aria-label="Slack"><svg class="h-7 w-7" viewBox="0 0 28 28" stroke-width="3" stroke-linecap="round"><circle cx="14" cy="14" r="14" fill="#fff"/><path d="M12 6.500h.1M6.500 11.500h5.500" stroke="#36c5f0"/><path d="M16 6v5.500M21.500 11.500h-.5" stroke="#2eb67d"/><path d="M12 16v6M6.500 16h.5" stroke="#e01e5a"/><path d="M16 16h5.500M16 21.500v.5" stroke="#ecb22e"/></svg></button>
      <button class="flex w-[62px] items-center justify-center" aria-label="File Explorer"><svg class="h-6 w-7" viewBox="0 0 28 24"><path d="M0 1h11l2 3h15v19H0z" fill="#e5ab2d"/><path d="M0 6h28v17H0z" fill="#fcd462"/><path d="M5 13h18v11h-4v-5h-10v5H5z" fill="#3f8ed0"/></svg></button>
      <button class="flex w-[62px] items-center justify-center" aria-label="Charts"><svg class="h-7 w-6" viewBox="0 0 24 28"><path d="M4 27C-1 16 6 1 17 0c5 4 5 12 3 17-2-8-5-9-9-6-5 4-4 10-7 16z" fill="#3456a4"/><path d="M4 27C1 16 7 5 16 3c-5 6-11 13-12 24z" fill="#17305e"/></svg></button>
      <button class="flex w-[62px] items-center justify-center" aria-label="Drawing tool"><svg class="h-7 w-7" viewBox="0 0 28 28"><path d="M1 0l10 13 3-3L3 0z" fill="#1c1cd0"/><path d="M10 13l4-3 10 10-3 4-7-2z" fill="#f0c020"/><path d="M20 26l6-8 2 3-4 7z" fill="#1c1cd0"/></svg></button>
      <button class="flex w-[62px] items-center justify-center" aria-label="Outlook"><svg class="h-7 w-[30px]" viewBox="0 0 30 28"><path d="M5 8L17 0l13 8v18H7z" fill="#1d72c8"/><path d="M7 14l12 7 11-9v15H7z" fill="#3ec4f4"/><path d="M9 4h14v9H9z" fill="#78d2f5"/><rect y="7" width="15" height="15" rx="1.500" fill="#0f5ba8"/><text x="2.500" y="19" font-size="13" font-weight="700" fill="#fff">O</text></svg></button>
      <button class="flex w-[62px] items-center justify-center" aria-label="Calculator"><svg class="h-7 w-6" viewBox="0 0 24 28"><rect width="24" height="28" rx="2" fill="#6e7b88"/><path d="M2 3h20v5H2z" fill="#5ecbf0"/><path d="M3 11h4v4H3zM10 11h4v4h-4zM17 11h4v4h-4zM3 17h4v3H3zM10 17h4v3h-4zM3 22h4v3H3zM10 22h4v3h-4z" fill="#e8edf2"/><path d="M17 17h4v8h-4z" fill="#134a93"/></svg></button>
      <button class="flex w-[62px] items-center justify-center" aria-label="Snip"><svg class="h-[30px] w-7" viewBox="0 0 28 30"><path d="M4 4Q14-3 21 3q8 8 3 18l-6-4Q22 6 11 8z" fill="#d8461c"/><path d="M14 4l1 16M18 8l-8 12" stroke="#ccc" stroke-width="3"/><circle cx="7" cy="24" r="3.500" fill="none" stroke="#2b8ae0" stroke-width="2.500"/><circle cx="17" cy="26" r="3" fill="none" stroke="#2b8ae0" stroke-width="2.500"/></svg></button>
      <button class="flex w-[62px] items-center justify-center" aria-label="Chrome"><svg class="h-7 w-7" viewBox="0 0 28 28"><circle cx="14" cy="14" r="14" fill="#fbc116"/><path d="M14 14L2 7a14 14 0 0 1 24 0z" fill="#e33b2e"/><path d="M14 14L1.900 7A14 14 0 0 0 13 28l6-11z" fill="#2da94f"/><circle cx="14" cy="14" r="7" fill="#fff"/><circle cx="14" cy="14" r="5.300" fill="#3b78e7"/></svg></button>
      <button class="flex w-[62px] items-center justify-center" aria-label="Trading"><svg class="h-[30px] w-[30px]" viewBox="0 0 30 30"><path d="M0 0h30v30H0z" fill="#13263c"/><g fill="#4ab4d6"><path d="M14 13L12 2h5z"/><path d="M14 13L3 6l3-3z" /><path d="M16 14l9-9 2 4z"/><path d="M13 15L2 14v4z"/><path d="M17 16l11 0v3z"/><path d="M14 17L5 27l-3-3z"/><path d="M15 17l-1 12 4-1z"/><path d="M16 16l10 10-3 2z"/></g></svg></button>
      <button class="relative flex w-[62px] items-center justify-center bg-[#5f6d76]" aria-label="Grammarly"><svg class="h-[30px] w-[30px]"><use href="#gram"/></svg><span class="absolute bottom-0 h-[3px] w-full bg-[#8cc4f0]"></span></button>
      <button class="flex w-[62px] items-center justify-center" aria-label="Grammarly editor"><svg class="h-[30px] w-[30px]" viewBox="0 0 30 30"><path d="M15 0a15 15 0 0 1 0 30H1V14A14 14 0 0 1 15 0z" fill="#1b8a70"/><path d="M21 9.500C16 4 7.500 8 8 15.500s11 9 14 2V16h-7" fill="none" stroke="#fff" stroke-width="2.500"/></svg></button>
      <button class="flex w-[62px] items-center justify-center" aria-label="Norton"><svg class="h-[30px] w-[30px]" viewBox="0 0 30 30"><rect width="30" height="30" rx="5" fill="#fde01a"/><circle cx="15" cy="15" r="9" fill="none" stroke="#222" stroke-width="2.500"/><path d="M10.500 14.500l4 4L23 8" fill="none" stroke="#222" stroke-width="2.800"/></svg></button>
    </div>
    <div class="ml-auto flex items-center">
      <span class="h-[26px] w-[26px] rounded-full bg-linear-to-br from-[#fbc02d] to-[#ef7d10]"></span>
      <span class="ml-[13px] text-base">47°F</span>
      <svg class="ml-[31px] h-2.5 w-4" viewBox="0 0 16 10"><path d="M1 9l7-7 7 7" fill="none" stroke="#fff" stroke-width="1.400"/></svg>
      <svg class="ml-[13px] h-5 w-5"><use href="#gram"/></svg>
      <svg class="ml-[10px] h-4 w-5" viewBox="0 0 20 16"><path d="M5 1h14v10H4M12 11v4M8 15h8M1 0v4h3V0M2.500 4v7" fill="none" stroke="#fff" stroke-width="1.300"/></svg>
      <svg class="ml-[10px] h-4 w-[18px]" viewBox="0 0 18 16"><path d="M1 5.500h3L9 1v14l-5-4.500H1zM11 5q2 3 0 6M13.500 3q3.500 5 0 10" fill="none" stroke="#fff" stroke-width="1.200"/><path d="M16 1q4 7 0 14" fill="none" stroke="#8a95a5"/></svg>
      <svg class="ml-[13px] h-5 w-3.5" viewBox="0 0 14 20"><rect x="3" width="8" height="14" rx="2" fill="#fff"/><path d="M1 9q0 7 6 7t6-7M7 16v4M4 19.500h6" fill="none" stroke="#fff" stroke-width="1.200"/></svg>
      <svg class="ml-[15px] h-3 w-[19px]" viewBox="0 0 19 12"><path d="M.6.6h16v10.800h-16zM17 4h1.500v4H17" fill="none" stroke="#fff"/><path d="M3 2.500h11v7H3z" fill="#fff"/></svg>
      <time class="ml-[12px] w-[72px] text-center text-sm leading-[23px] whitespace-nowrap">2:09 PM<br>2/25/2025</time>
      <button class="relative mr-[30px] ml-[22px] flex" aria-label="2 notifications"><svg class="h-5 w-5" viewBox="0 0 20 20"><path d="M0 0h19v15h-9l-4 5v-5H0z" fill="#fff"/><path d="M3 4h13M3 7.500h13M3 11h8" stroke="#1a2442" stroke-width="1.300"/></svg><span class="absolute top-2 left-2.5 flex h-5 w-5 items-center justify-center rounded-full border border-[#aaa] bg-[#3a3f48] text-xs font-semibold">2</span></button>
    </div>
  </div>
</footer>

<script>
// ---- Slide drawing: three chart windows side by side ----
const SANS = "'Liberation Sans',sans-serif", LATO = "Lato,sans-serif";
const esc = s => s.replace(/&/g, '&amp;');
const rect = (x, y, x2, y2, f, s = 'none', w = 1) => `<rect x="${x}" y="${y}" width="${x2 - x}" height="${y2 - y}" fill="${f}" stroke="${s}" stroke-width="${w}"/>`;
const line = (x, y, x2, y2, s, w = 1) => `<line x1="${x}" y1="${y}" x2="${x2}" y2="${y2}" stroke="${s}" stroke-width="${w}"/>`;
const text = (x, y, s, size, o = {}) => `<text x="${x}" y="${y}" font-size="${size}" font-family="${o.f || SANS}" fill="${o.c || '#222'}" text-anchor="${o.a || 'start'}">${esc(s)}</text>`;
const path = (d, s, w = 1.5, f = 'none') => `<path d="${d}" fill="${f}" stroke="${s}" stroke-width="${w}"/>`;

function win(x0, x1, active, title, info, vscroll) {
  let s = rect(x0, 252, x1, 983, active ? '#b3cee6' : '#dbe6f2');
  s += rect(x0, 252, x1, 280, active ? 'url(#tbA)' : 'url(#tbI)');
  s += rect(x0 + 4, 280, x1 - 4, 978, '#fff');
  s += rect(x0 + 4, 965, x1 - 4, 980, '#f0f0f0');
  s += rect(x0 + 6, 261, x0 + 16, 276, '#fff') + path(`M${x0 + 8} 264v8M${x0 + 12} 262v12M${x0 + 12} 270l3 3`, '#333', 1);
  s += text(x0 + (x0 === 1124 ? 12 : 19), 273, title, 9, { c: active ? '#333' : '#8f98a3' });
  s += text(x0 + (x0 === 1124 ? 0 : 6), 292, info, 8);
  [67, 44, 21].forEach((d, i) => {
    const bx = x1 - d + (active && vscroll < 900 && vscroll > 610 ? -7 : vscroll ? -3 : 6), red = active && i === 2;
    s += `<rect x="${bx}" y="260.500" width="20" height="17" rx="1" fill="${red ? '#c7563f' : active ? '#b4cbe4' : '#c8d7e6'}" stroke="#7d8fa3"/>`;
    const c = red ? '#fff' : '#555f6b';
    s += i === 0 ? rect(bx + 7, 269, bx + 13, 272, '#fff', c) : i === 1 ? rect(bx + 7, 265, bx + 13, 272, '#fff', c) + rect(bx + 9, 267, bx + 11, 270, c) : path(`M${bx + 7} 265l6 7M${bx + 13} 265l-6 7`, c, 2.2);
  });
  if (vscroll) {
    s += rect(x1 - 13, 280, x1 - 3, 980, '#f0f0f0') + path(`M${x1 - 10} 291l2.500-4 2.500 4M${x1 - 10} 955l2.500 4 2.500-4`, '#555');
    s += rect(x1 - 12, vscroll, x1 - 3, vscroll + 17, '#cdcdcd');
  }
  s += rect(x1 - (vscroll ? 39 : 26), 965, x1 - (vscroll ? 28 : 15), 979, '#cdcdcd');
  s += path(`M${x0 + 11} 968l-3 4 3 4M${x1 - (vscroll ? 24 : 12)} 968l3 4-3 4`, '#555');
  return s;
}
function grid(x0, axis, bottom, vTop, vBot, step, yTop, yBot, skip) {
  let s = '';
  const n = Math.round((vTop - vBot) / step);
  for (let i = 0; i <= n; i++) {
    const y = yTop + (yBot - yTop) * i / n;
    if (!(skip && i === 0)) s += line(x0, y, axis, y, '#cfcfcf', 1.2);
    s += line(axis, y, axis + 2, y, '#222') + text(axis + 3, y + 3, (vTop - step * i).toFixed(2), 8);
  }
  return s + line(axis, 281, axis, bottom, '#333', 1.3) + line(x0, bottom, axis, bottom, '#333', 1.3);
}
const bars = (list, w = 3.6) => list.map(([x, a, b, l, r, sq]) =>
  `<line x1="${x}" y1="${a + 1}" x2="${x}" y2="${b - 1}" stroke="#000" stroke-width="${w}" stroke-linecap="round"/>` +
  (l ? line(x - 7, l, x, l, '#000', 1.1) : '') + (r ? line(x, r, x + 9 - (w < 3.6 ? 2 : 0), r, '#000', 2.6) : '') +
  (sq ? rect(x - 2, sq - 3, x + 2, sq + 3, '#000') : '')).join('');
const dashes = (l, c, h = 5, w = 2) => l.map(([x, y]) => line(x - h, y, x + h, y, c, w)).join('');
const ovals = l => l.map(([x, y]) => `<ellipse cx="${x}" cy="${y}" rx="3.500" ry="4.700" fill="#ea2e0c"/>`).join('');
const gUp = l => l.map(([x, y]) => path(`M${x - 3} ${y + 2.5}q0-5 3-5t3 5`, '#3fe08a', 1.5)).join('');
const gDn = l => l.map(([x, y]) => path(`M${x - 3} ${y - 2.5}q0 5 3 5t3-5`, '#3fe08a', 1.5)).join('');
const pUp = l => l.map(([x, y]) => path(`M${x - 3.5} ${y + 2}v-4h7v4`, '#7428c8', 1.6)).join('');
const pDn = l => l.map(([x, y]) => path(`M${x - 3.5} ${y - 2}v4h7v-4`, '#7428c8', 1.6)).join('');
const boxes = (l, c, w = 1.3) => l.map(b => rect(...b, 'none', c, w)).join('');
const fills = (l, c) => l.map(b => rect(...b, c)).join('');
const dates = (xs, rows, y, tick) => xs.map((x, i) => line(x, tick, x, tick + 7, '#333') + rows[i].map((t, k) => text(x, y + k * 14.500, t, 9, { a: 'middle' })).join('')).join('');
const PINK = '#f8827c', OUT = '#ee8078', GRY = '#777', RED = '#cf2d20';
const defs = `<defs><linearGradient id="tbA" x2="0" y2="1"><stop stop-color="#9cb9d9"/><stop offset="1" stop-color="#b9d0e8"/></linearGradient><linearGradient id="tbI" x2="0" y2="1"><stop stop-color="#bccbdb"/><stop offset="1" stop-color="#d5e2f0"/></linearGradient></defs>`;
const page = t => rect(580, 209, 1611, 983, '#fff', '#c4c4c4') + text(1041, 239, t, 24, { f: LATO, a: 'middle', c: '#000' });
const arrow = (x, y, x2, y2, w = 1.2) => {
  const a = Math.atan2(y2 - y, x2 - x), p = (r, d) => `${(x2 - r * Math.cos(a + d)).toFixed(1)} ${(y2 - r * Math.sin(a + d)).toFixed(1)}`;
  return line(x, y, x2, y2, '#000', w) + `<path d="M${x2} ${y2}L${p(9, .4)}L${p(9, -.4)}z"/>`;
};
const heads = xs => ['Monthly', 'Weekly', 'Daily'].map((t, i) => text(xs[i], 276, t, 24, { f: LATO, a: 'middle', c: '#000' })).join('');

function corn() {
  let s = defs + page('May Corn – setup for Wednesday');
  // Monthly
  s += win(580, 839, false, 'CK255.txt - Monthly', 'H=518.75  L=484.00  C=494.75  TR Up  6-7 Up Reg');
  s += grid(584, 808.500, 913.500, 535, 420, 5, 298, 897.300);
  s += fills([[744, 394, 757, 409], [744, 588, 757, 682]], PINK) + fills([[744, 749, 755, 764]], '#c4c4c4');
  s += bars([[585, 812, 913, 0, 855], [612, 721, 868, 857, 737, 713], [640, 682, 887, 751.5, 822], [668, 718, 833, 822, 795], [696, 653, 825, 796, 659], [723.5, 437, 707, 663, 517], [751.5, 381, 566, 544, 508]]);
  s += dashes([[641, 518.5], [669, 501.5], [696.7, 552], [724.7, 478.5], [587, 678.5], [613.5, 751], [752.5, 757]], RED) + dashes([[640, 632.5], [668, 644.5], [668, 905]], '#888', 3, 1.5) + dashes([[752, 587.5], [724, 815.5], [640, 804.5], [696, 753.5]], '#c22bc2', 3, 1.8) + dashes([[748.5, 641.5]], '#9a4a1a', 3.5, 1.8);
  s += ovals([[598, 797], [626, 823], [653.5, 812.5], [681, 785], [709, 764], [737, 682]]) + '<circle cx="765" cy="594" r="1.600" fill="#d22"/>';
  s += gUp([[640, 687], [668, 711], [612, 805], [696, 735], [724, 605], [751, 405]]) + gDn([[640, 824], [696, 840], [724, 767], [751, 667], [668, 908]]);
  s += pUp([[668, 740], [696, 739]]) + pDn([[640, 777], [696, 849], [724, 871], [724, 703], [751, 658]]);
  s += dates([584, 612, 640, 668, 696, 723.5, 751.5], [['30', '08', '24'], ['30', '09', '24'], ['31', '10', '24'], ['29', '11', '24'], ['31', '12', '24'], ['31', '01', '25'], ['28', '02', '25']], 932, 914);
  s += rect(580, 914, 584, 965, '#dbe6f2');
  // Daily
  s += win(1124, 1611, false, 'CK257.txt - Daily - 25', 'H=498.50  L=488.50  C=494.75  TR Down  6-7 Down Reg', 498);
  s += grid(1130, 1572.700, 913.500, 524, 466, 2, 289.700, 910.700, true);
  s += boxes([[1125, 468, 1165.600, 484.600], [1170.600, 382.600, 1257.500, 399.500], [1170.600, 506, 1257.500, 522.500], [1125, 557.600, 1165.600, 573], [1262.600, 495, 1349, 546.500], [1354.300, 420.500, 1440.600, 439], [1354.300, 560.700, 1440.600, 578], [1445.600, 374.600, 1513.600, 391.500], [1445.600, 476, 1513.600, 560], [1519.500, 389.600, 1573, 406], [1519.500, 546.700, 1573, 584], [1170.600, 610.500, 1257.500, 693.500], [1125, 708, 1165.600, 822.500], [1262.600, 712, 1349, 763.500], [1354.300, 688, 1440.600, 706.500], [1445.600, 670, 1513.600, 686.500], [1519.500, 649.500, 1573, 665.700], [1262.600, 846.600, 1349, 861.600], [1170.600, 879, 1257.500, 894.500]], GRY);
  s += boxes([[1125, 529.600, 1257.500, 559], [1262.600, 369.500, 1573, 400.700], [1125, 770.600, 1257.500, 799.500]], OUT, 2.2);
  s += path('M1262.600 913V768.500H1573', OUT, 2.2) + line(1573, 281, 1573, 913.500, '#333', 1.600) + line(1262, 913.500, 1573, 913.500, '#333', 1.600);
  s += fills([[1557, 413, 1565.5, 422], [1538.5, 455, 1547, 480], [1538.5, 513, 1547, 532], [1557, 525, 1565, 553], [1538.5, 615, 1547, 625.5], [1557, 634, 1565, 660]], PINK) + fills([[1538, 688, 1545, 698], [1557, 736, 1563, 747]], '#bdbdbd');
  const X = i => 1140 + 18.32 * i;
  s += bars([[499, 652, 613, 554], [558, 625, 605, 584, 633], [604, 679, 605, 629], [548, 644, 629, 589, 540], [459, 596, 594, 466], [467, 540, 477, 530.7], [545, 647, 559, 621, 654.6], [523, 719, 675, 549], [462, 567, 557, 496, 455], [448, 532, 501, 496], [453, 569, 499, 466], [451, 567, 466, 541.7, 574], [488, 599, 565, 499, 480], [437, 578, 499, 567, 585], [486, 599, 570, 504, 478], [475, 553, 512, 482], [417, 495, 490, 453], [355, 490, 461, 377.6], [344, 431, 383.5, 415.5], [352, 422, 418, 410], [398, 503, 415, 493.5, 509], [488, 599, 577, 578.5], [561, 671, 573, 602]].map((b, i) => [X(i), ...b]), 3.5);
  s += dashes([[1141, 425.7], [1159, 369], [1177.5, 468.5], [1214, 419.7], [1251, 342], [1287.5, 403.7], [1324, 334], [1342.5, 380], [1361, 337], [1379, 414.7], [1416, 399], [1434, 356], [1452.5, 508], [1489, 500], [1526, 377], [1470.6, 557], [1507.6, 495], [1269, 554], [1196, 586], [1251, 615.7], [1232.6, 639.5], [1214, 680.5], [1141, 715], [1177.5, 747], [1159, 774], [1196, 795], [1269, 821.5], [1287.5, 888], [1306, 604.5], [1324, 596.5], [1342.5, 685.5], [1361, 674.5], [1397.5, 661.5], [1379, 741], [1416, 755], [1434, 615.6], [1526, 648], [1544, 795], [1562.5, 848.5]], RED, 4.8);
  s += dashes([[1488, 334], [1544, 693], [1562, 741]], '#777', 3, 1.5) + dashes([[1507, 361], [1470, 481.5], [1507, 412]], '#c22bc2', 3, 1.8) + dashes([[1540, 497], [1558, 580]], '#8a5a1a', 3.5, 1.8);
  s += ovals([[1148, 578], [1166.6, 582], [1185, 597.5], [1203, 606.5], [1221.6, 579], [1240, 537], [1258, 541], [1276.6, 571], [1295, 570], [1313, 532], [1331.6, 498], [1350, 502], [1368, 514], [1386.6, 525], [1405, 528.5], [1423, 520.5], [1441.6, 495.5], [1460, 454.6], [1478, 419], [1496.6, 399], [1515, 417.5], [1533, 471.5], [1551.6, 543], [1131, 606.5]]) + '<circle cx="1551.600" cy="532" r="1.600" fill="#d22"/><circle cx="1570" cy="590" r="2" fill="#d22"/>';
  s += gUp([[1158, 489], [1231, 422], [1250, 489], [1341, 427], [1360, 476], [1415, 464], [1469, 329], [1506, 370], [1488, 367], [1286, 480], [1305, 454], [1323, 457], [1378, 463], [1433, 458], [1396, 482], [1140, 551], [1176, 556], [1561, 556], [1524, 431], [1267, 566], [1451, 487], [1451, 419], [1543, 515], [1543, 616]]);
  s += gDn([[1231, 550], [1469, 455], [1488, 444], [1305, 549], [1323, 530], [1341, 534], [1433, 528], [1414, 568.5], [1378, 563], [1360, 583], [1250, 553], [1213, 548], [1140, 649], [1195, 600], [1195, 666.5], [1213, 635], [1286, 666.5], [1268, 659], [1176, 616], [1396, 613], [1525, 526], [1158, 634], [1506, 432], [1561, 657]]);
  s += pUp([[1524, 337], [1543, 346], [1506, 379], [1488, 411], [1524, 439], [1543, 454], [1561, 418], [1561, 525]]) + pDn([[1469, 421], [1506, 443], [1488, 491], [1469, 551]]);
  const jan = ['23', '24', '27', '28', '29', '30', '31'], feb = ['03', '04', '05', '06', '07', '10', '11', '12', '13', '14', '18', '19', '20', '21', '24', '25'];
  const rows = [...jan.map(d => [d, '01', '25']), ...feb.map(d => [d, '02', '25'])];
  s += dates(rows.map((_, i) => X(i)), rows, 932, 914);
  s += text(1421, 924, 'Activate Windows', 14, { c: '#b4b4b4' }) + text(1421, 946, 'Go to Settings to activate Windows.', 10, { c: '#bcbcbc' });
  s += text(1504, 430, 'Solid D', 16, { f: LATO, c: '#000' }) + text(1504, 451, 'resistance', 16, { f: LATO, c: '#000' }) + text(1497, 715, 'D/W', 16, { f: LATO, c: '#000' }) + text(1497, 736, 'support', 16, { f: LATO, c: '#000' });
  s += arrow(1540, 455, 1558, 510) + arrow(1538, 722, 1556, 660);
  // Weekly
  s += win(839, 1130, true, 'CK256.txt - Weekly - 24', 'H=505.25  L=488.50  C=494.75  CEnt Down  6-5 Down', 627);
  s += grid(843.500, 1087.300, 916.300, 524, 468, 2, 300.700, 916);
  s += boxes([[923.700, 382.700, 1040.500, 413.500], [843, 546, 918.500, 576.500], [843, 792.500, 918.500, 822.500], [923.700, 791, 1040.500, 916]], OUT, 1.4);
  s += line(843, 916.300, 1087, 916.300, '#333', 1.500);
  s += fills([[1019, 404, 1034, 420.500], [1019, 565, 1034, 602]], PINK) + fills([[1019, 670, 1031, 686]], '#bdbdbd');
  s += bars([[844.5, 628, 804, 0, 641], [874.5, 516, 673, 644, 602], [905, 474, 701, 624, 641], [935.5, 463, 742, 696, 558.7], [966, 430, 618, 584, 468], [996.7, 357, 520, 476, 510], [1027, 505, 692, 514.5, 621, 698]]);
  s += dashes([[847, 495.5], [906, 711], [875.5, 837.5], [936.5, 878.5], [997.5, 766], [1028, 602]], RED) + dashes([[905, 405], [936, 434.5], [966.5, 780]], '#888', 3, 1.5) + dashes([[1024, 494.5], [1027, 419]], '#a0602a', 3.5, 1.8);
  s += ovals([[1011, 518.5], [980.5, 566], [950, 596], [919.5, 630.5], [889, 714.5], [858.5, 846.5]]) + '<circle cx="1042" cy="491.500" r="1.600" fill="#d22"/>';
  s += gUp([[996, 398], [1027, 408], [966, 438], [935, 514], [905, 525], [874, 582], [1027, 561]]) + gDn([[996, 575], [905, 673], [966, 707], [935, 729], [874, 749]]);
  s += pUp([[966, 455], [935, 564]]) + pDn([[996, 515], [1027, 518], [1027, 676], [996.5, 698], [966, 726], [905, 757.5], [935.5, 783.5], [905, 911]]);
  s += dates([845, 874.500, 905, 935.500, 966, 996.700, 1027], [['17', '01', '25'], ['24', '01', '25'], ['31', '01', '25'], ['07', '02', '25'], ['14', '02', '25'], ['21', '02', '25'], ['28', '02', '25']], 935, 917);
  s += rect(839, 917, 843, 965, '#b3cee6') + line(839, 254, 839, 983, '#2d5a70', 1.300) + line(1129.500, 254, 1129.500, 983, '#2d5a70', 1.300);
  return s + heads([684, 957, 1402]);
}

// Smaller decks: positions given on the thumbnail's own grid, mapped to slide units
function mini(title, oy, d) {
  const mx = x => 580 + (x - 133) * 1.577, my = y => 209 + (y - oy) * 1.87;
  const B = l => l.map(([a, b, c, e]) => [mx(a), my(b), mx(c), my(e)]);
  let s = defs + page(title);
  const e = [133, d.split[0], d.split[1], 786].map(mx);
  const infos = ['H=1101.00  L=1030.00  C=1048.00  TR Up', 'H=1078.00  L=1040.00  C=1048.00', 'H=1059.00  L=1044.00  C=1048.00  TR Down  6-5 Down'];
  for (let k = 0; k < 3; k++) {
    s += win(e[k], e[k + 1], k === 2, 'CK25' + (5 + k) + '.txt', infos[k], k ? 600 : 0);
    s += grid(e[k] + 4, mx(d.axis[k]), 913, 1120, 1000, 5, 298, 905);
  }
  s += boxes(B(d.red), OUT, 2) + boxes(B(d.gray), '#888', 1.5) + fills(B(d.pink), PINK);
  const all = d.bars;
  s += bars(all.map(([x, a, b]) => [mx(x), my(a), my(b), my(a) + 20, my(b) - 25]), 4.2);
  s += ovals(all.map(([x, a, b], i) => [mx(x) + 9, my(a + (b - a) * (.3 + (i % 4) * .15))]));
  s += dashes(all.map(([x, a], i) => [mx(x), my(a) - 60 - (i * 37) % 110]).filter(p => p[1] > 300), RED, 4.5);
  s += gUp(all.map(([x, a]) => [mx(x), my(a) - 10])) + pDn(all.filter((_, i) => i % 3 === 0).map(([x, , b]) => [mx(x), my(b) + 30]));
  s += dates(all.map(b => mx(b[0])), all.map((_, i) => [String(10 + i % 20), '02', '25']), 932, 914);
  s += heads([684, 930, 1402]);
  d.notes.forEach(([t, x, y]) => s += text(mx(x), my(y), t, 16, { f: LATO, c: '#000' }));
  d.arrows.forEach(a => s += arrow(mx(a[0]), my(a[1]), mx(a[2]), my(a[3]), 3));
  return s;
}
document.getElementById('slide').innerHTML = corn();
document.getElementById('t1').innerHTML = corn();
document.getElementById('t2').innerHTML = mini('May Soybeans – setup for Wednesday', 530, {
  split: [299, 454], axis: [277, 432, 757],
  bars: [[139, 675, 795], [155, 625, 740], [173, 633, 797], [191, 700, 810], [208, 767, 873], [226, 667, 810], [242, 648, 747], [319, 641, 765], [334, 675, 765], [351, 628, 770], [368, 688, 793], [384, 707, 780], [400, 726, 798], [458, 645, 700], [469, 637, 727], [480, 680, 735], [491, 712, 745], [503, 710, 750], [515, 667, 735], [527, 675, 745], [539, 702, 787], [551, 652, 765], [563, 633, 710], [575, 625, 700], [587, 655, 720], [598, 668, 710], [611, 695, 730], [623, 683, 732], [635, 712, 785], [647, 750, 787], [659, 717, 780], [671, 710, 770], [683, 712, 765], [695, 707, 765], [707, 703, 750], [718, 722, 782], [731, 737, 798]],
  pink: [[237, 648, 246, 658], [237, 750, 246, 793], [393, 626, 404, 634], [393, 676, 404, 702], [393, 752, 404, 778], [738, 700, 744, 726], [730, 738, 744, 753], [738, 772, 744, 787]],
  red: [[343, 600, 407, 622], [301, 618, 341, 638], [343, 797, 407, 892], [456, 612, 545, 634], [547, 596, 757, 616], [456, 755, 545, 773], [547, 797, 757, 895]],
  gray: [[487, 602, 545, 638], [547, 582, 605, 592], [607, 633, 665, 648], [667, 650, 710, 662], [667, 693, 712, 770], [547, 770, 605, 781], [607, 775, 665, 790], [456, 788, 485, 838], [607, 852, 665, 862], [547, 873, 605, 886], [487, 882, 545, 891], [714, 620, 757, 629], [714, 872, 757, 881]],
  notes: [['Solid D', 705, 683], ['resistance', 705, 694], ['D/W', 705, 822], ['support', 705, 835]], arrows: [[733, 700, 742, 736], [734, 812, 743, 793]]
});
document.getElementById('t3').innerHTML = mini('May Wheat – setup for Wednesday', 1008, {
  split: [291, 447], axis: [269, 427, 760],
  bars: [[151, 1138, 1253], [169, 1095, 1223], [186, 1185, 1312], [202, 1248, 1333], [220, 1240, 1336], [237, 1150, 1293], [294, 1263, 1320], [310, 1218, 1285], [327, 1208, 1308], [344, 1147, 1262], [361, 1118, 1203], [377, 1104, 1168], [394, 1152, 1223], [451, 1243, 1300], [462, 1263, 1300], [475, 1277, 1322], [488, 1300, 1350], [500, 1300, 1347], [512, 1242, 1311], [525, 1232, 1265], [537, 1237, 1290], [550, 1215, 1295], [562, 1205, 1270], [574, 1188, 1245], [587, 1175, 1238], [599, 1163, 1215], [611, 1177, 1207], [624, 1175, 1217], [636, 1185, 1223], [649, 1190, 1225], [662, 1115, 1217], [674, 1103, 1140], [687, 1104, 1157], [699, 1143, 1187], [712, 1143, 1175], [724, 1155, 1187], [737, 1165, 1247]],
  pink: [[233, 1143, 241, 1155], [233, 1213, 241, 1227], [233, 1278, 241, 1293], [389, 1092, 399, 1116], [389, 1160, 399, 1180], [733, 1168, 739, 1182], [745, 1185, 751, 1203]],
  red: [[337, 1087, 400, 1103], [293, 1090, 335, 1103], [337, 1255, 400, 1278], [337, 1297, 400, 1312], [293, 1300, 335, 1361], [449, 1083, 542, 1101], [544, 1080, 760, 1103], [544, 1190, 760, 1207], [544, 1287, 760, 1314], [449, 1242, 542, 1260], [449, 1341, 542, 1357], [544, 1337, 760, 1357]],
  gray: [[544, 1136, 605, 1144], [607, 1090, 666, 1100], [670, 1077, 718, 1092], [607, 1134, 666, 1142], [483, 1190, 542, 1197], [607, 1230, 666, 1270], [544, 1280, 605, 1333], [483, 1260, 542, 1290], [607, 1357, 666, 1366], [544, 1367, 605, 1376], [670, 1212, 718, 1222], [670, 1280, 718, 1290], [722, 1240, 760, 1246]],
  notes: [['Solid D', 711, 1120], ['resistance', 711, 1132], ['D/W', 702, 1270], ['support', 702, 1282]], arrows: [[734, 1138, 749, 1180], [731, 1265, 748, 1247]]
});
</script>
</body>
</html>
